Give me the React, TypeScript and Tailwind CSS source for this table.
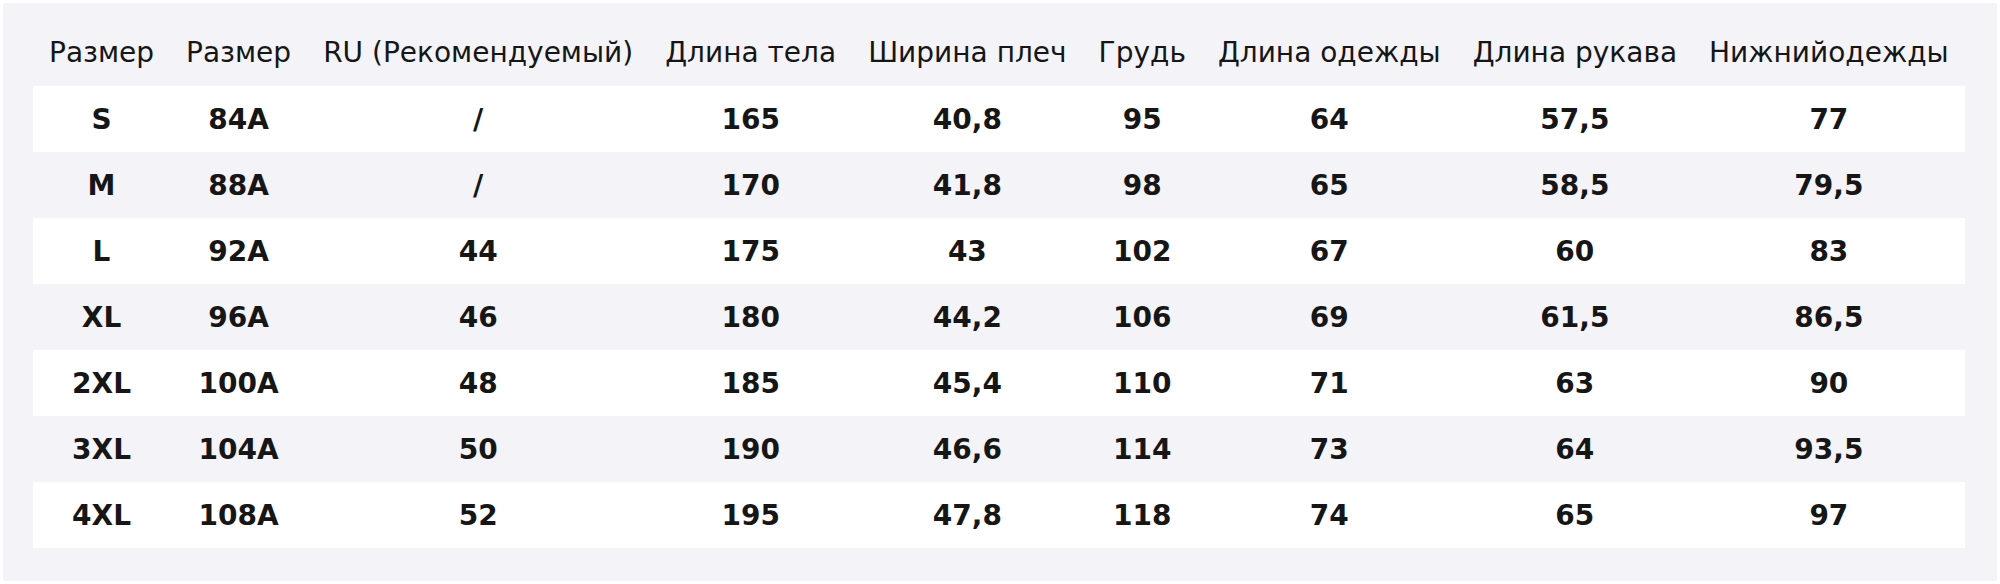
import React from "react";

const headers = [
  "Размер",
  "Размер",
  "RU (Рекомендуемый)",
  "Длина тела",
  "Ширина плеч",
  "Грудь",
  "Длина одежды",
  "Длина рукава",
  "Нижнийодежды",
];

const rows = [
  ["S", "84A", "/", "165", "40,8", "95", "64", "57,5", "77"],
  ["M", "88A", "/", "170", "41,8", "98", "65", "58,5", "79,5"],
  ["L", "92A", "44", "175", "43", "102", "67", "60", "83"],
  ["XL", "96A", "46", "180", "44,2", "106", "69", "61,5", "86,5"],
  ["2XL", "100A", "48", "185", "45,4", "110", "71", "63", "90"],
  ["3XL", "104A", "50", "190", "46,6", "114", "73", "64", "93,5"],
  ["4XL", "108A", "52", "195", "47,8", "118", "74", "65", "97"],
];

export default function App() {
  return (
    <div className="w-[2000px] h-[584px] bg-white p-[3px] font-['DejaVu_Sans',sans-serif] text-[#161616]">
      <div className="h-full bg-[#f3f3f8] pt-[17px] pb-[32px] px-[30px]">
        <table className="border-collapse text-[28px] leading-none">
          <thead>
            <tr className="h-[66px]">
              {headers.map((h, i) => (
                <th
                  key={i}
                  className="px-4 font-normal text-center whitespace-nowrap align-middle"
                >
                  {h}
                </th>
              ))}
            </tr>
          </thead>
          <tbody>
            {rows.map((r, ri) => (
              <tr
                key={ri}
                className={ri % 2 === 0 ? "h-[66px] bg-white" : "h-[66px] bg-[#f3f3f8]"}
              >
                {r.map((c, ci) => (
                  <td
                    key={ci}
                    className="px-4 pt-[2px] font-bold text-center whitespace-nowrap align-middle"
                  >
                    {c}
                  </td>
                ))}
              </tr>
            ))}
          </tbody>
        </table>
      </div>
    </div>
  );
}
